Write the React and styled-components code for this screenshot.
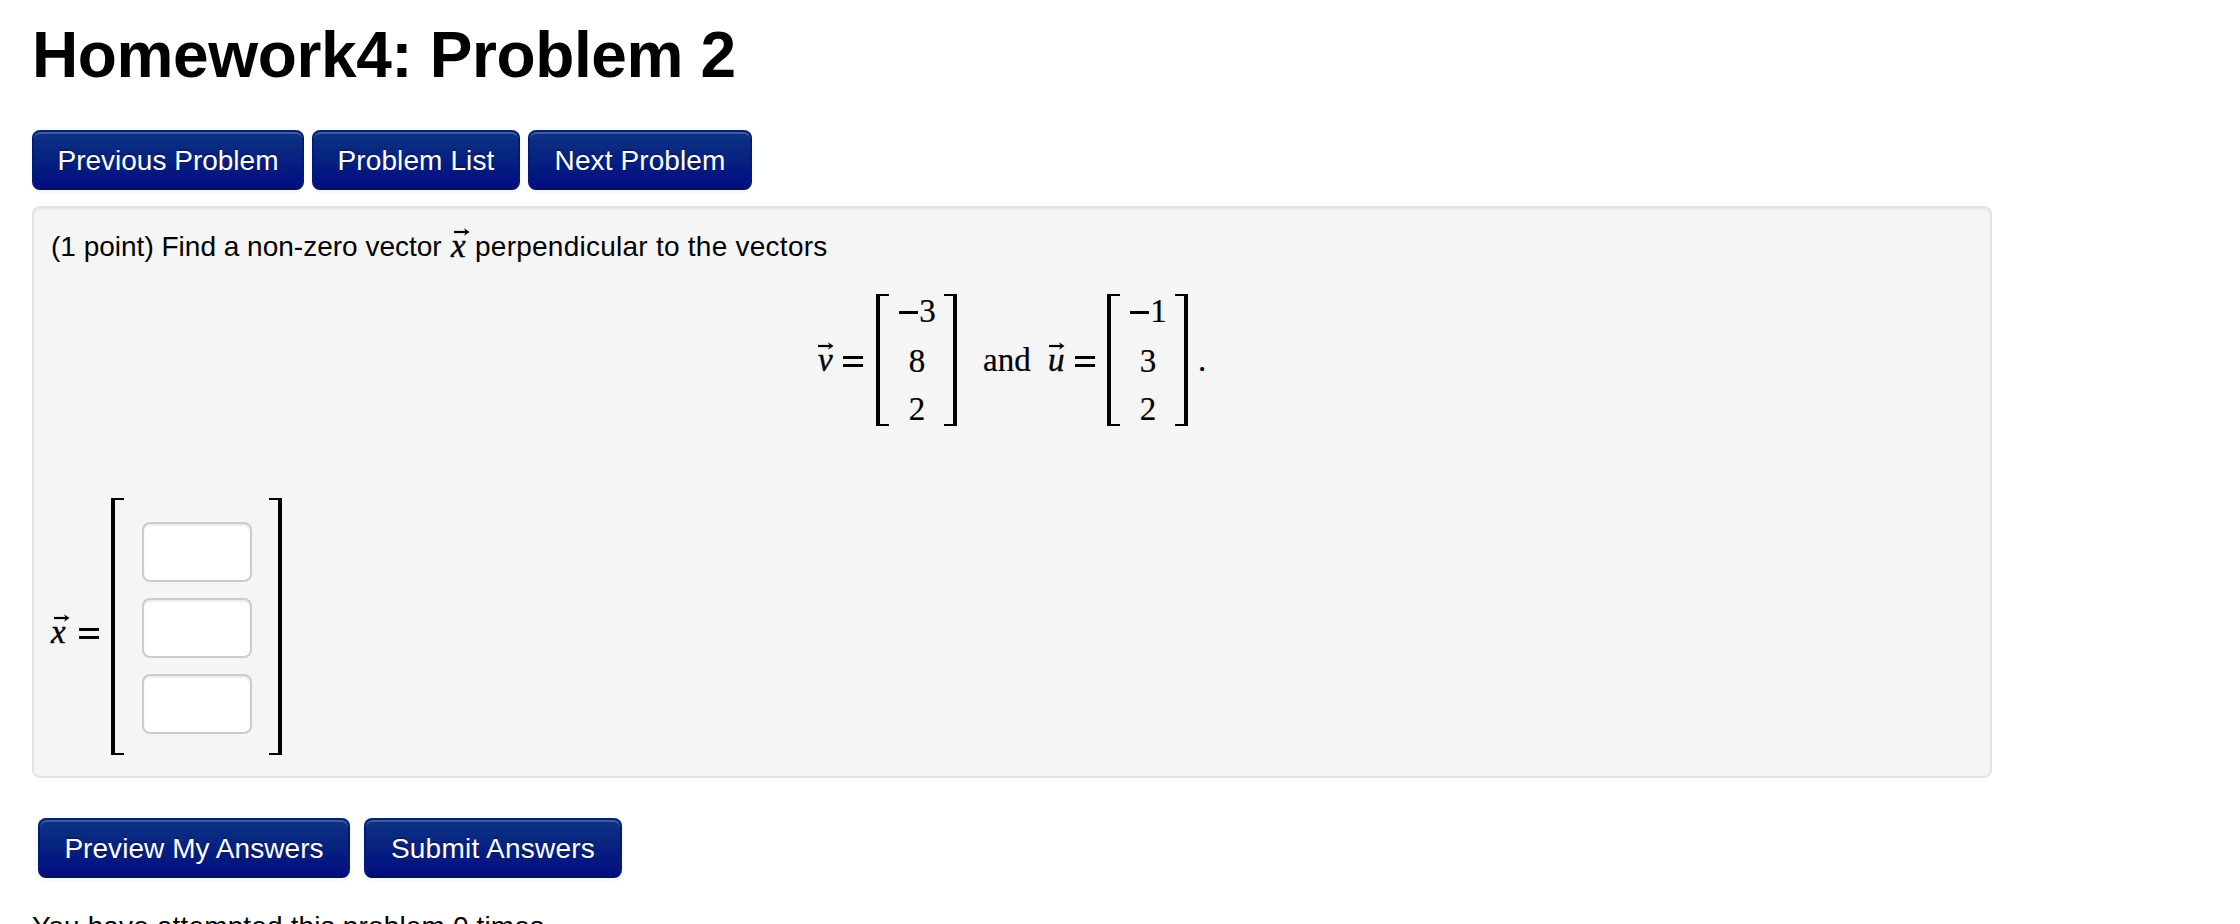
import React from "react";
import styled, { createGlobalStyle } from "styled-components";

const GlobalStyle = createGlobalStyle`
  body {
    margin: 0;
    background: #fff;
    color: #000;
    font-family: "Liberation Sans", Arial, sans-serif;
    font-size: 28px;
    line-height: 40px;
  }
  *, *::before, *::after {
    box-sizing: border-box;
  }
`;

const Page = styled.main`
  height: 924px;
  padding: 0 32px;
  overflow: hidden;
`;

const Title = styled.h1`
  margin: 0;
  padding-top: 15px;
  height: 130px;
  font-size: 64px;
  line-height: 80px;
  letter-spacing: -0.38px;
`;

const ButtonRow = styled.div`
  display: flex;
  gap: ${(props) => props.$gap || 8}px;
  margin: ${(props) => props.$margin || "0"};
`;

const Button = styled.button`
  width: ${(props) => props.$width}px;
  height: 60px;
  padding: 1px 0 0;
  border: 2px solid;
  border-color: #00207b #001b78 #001060;
  border-radius: 8px;
  background: linear-gradient(to bottom, #0d3583, #000c80) border-box;
  box-shadow: inset 0 2px 0 rgba(255, 255, 255, 0.2),
    0 2px 4px rgba(0, 0, 0, 0.05);
  color: #fff;
  font: 28px/40px "Liberation Sans", Arial, sans-serif;
  letter-spacing: ${(props) => props.$spacing || 0}px;
  text-shadow: 0 -2px 0 rgba(0, 0, 0, 0.25);
  white-space: nowrap;
`;

const Well = styled.section`
  width: 1960px;
  height: 572px;
  margin-top: 16px;
  padding: 19px 17px 0;
  border: 2px solid #e3e3e3;
  border-radius: 8px;
  background: #f5f5f5;
  box-shadow: inset 0 2px 2px rgba(0, 0, 0, 0.05);
`;

const Statement = styled.p`
  display: flex;
  margin: 0;
  height: 67px;
  white-space: pre;
`;

const Prompt = styled.span`
  width: ${(props) => props.$width}px;
  letter-spacing: ${(props) => props.$spacing || 0}px;
`;

const Equation = styled.div`
  display: flex;
  align-items: center;
  height: ${(props) => props.$height}px;
  padding-left: ${(props) => props.$indent || 0}px;
  margin-top: ${(props) => props.$top || 0}px;
  font-family: "Liberation Serif", "Times New Roman", serif;
  font-size: 33px;
  -webkit-text-stroke: 0.2px #000;
`;

const VectorBox = styled.span`
  display: flex;
  flex-direction: column;
  flex-shrink: 0;
  width: ${(props) => props.$width || 25}px;
  margin-top: ${(props) => props.$top || 0}px;
  font: italic 33px/28px "Liberation Serif", "Times New Roman", serif;
  -webkit-text-stroke: 0.4px #000;

  svg {
    display: block;
    flex-shrink: 0;
    margin: 0 0 -5px ${(props) => props.$shift || 0}px;
  }
`;

const Equals = styled.span`
  width: 20px;
  height: 11px;
  margin: ${(props) => props.$margin};
  border: solid #000;
  border-width: 3px 0;
`;

const Bracket = styled.span`
  align-self: stretch;
  width: 13px;
  border: solid #000;
  border-width: ${(props) => (props.$right ? "2px 4px 2px 0" : "2px 0 2px 4px")};
`;

const Entries = styled.div`
  display: grid;
  grid-template-rows: 50px 48px 33px;
  width: 55px;
  height: 132px;
  padding: 1px 0 0 1px;
  line-height: 33px;
`;

const Entry = styled.span`
  display: flex;
  align-items: flex-start;
  justify-content: center;
`;

const Minus = styled.span`
  width: 19px;
  height: 3px;
  margin: 16px 1px 0 1px;
  background: #000;
`;

const Word = styled.span`
  width: ${(props) => props.$width}px;
  margin-left: ${(props) => props.$left}px;
  line-height: 40px;
`;

const Answers = styled.div`
  display: flex;
  flex-direction: column;
  gap: 16px;
  margin: 3px 17px 0 18px;
`;

const AnswerInput = styled.input`
  display: block;
  width: 110px;
  height: 60px;
  padding: 8px 12px;
  border: 2px solid #ccc;
  border-radius: 8px;
  background: #fff;
  box-shadow: inset 0 2px 2px rgba(0, 0, 0, 0.075);
  font-size: 28px;
  outline: none;
`;

const Attempts = styled.p`
  margin: 29px 0 0;
  letter-spacing: 0.15px;
`;

const Vector = ({ name, ...rest }) => (
  <VectorBox {...rest}>
    <svg width="16" height="10" viewBox="0 0 16 10">
      <path d="M0 5H13" stroke="#000" strokeWidth="2.2" />
      <path d="M10 1.2L15.5 5L10 8.8L11.8 5Z" />
    </svg>
    {name}
  </VectorBox>
);

const Matrix = ({ values }) => (
  <>
    <Bracket />
    <Entries>
      {values.map((value) => (
        <Entry key={value}>
          {value < 0 && <Minus />}
          {Math.abs(value)}
        </Entry>
      ))}
    </Entries>
    <Bracket $right />
  </>
);

const App = () => (
  <>
    <GlobalStyle />
    <Page>
      <Title>Homework4: Problem 2</Title>
      <ButtonRow>
        <Button $width={272}>Previous Problem</Button>
        <Button $width={208} $spacing={0.1}>Problem List</Button>
        <Button $width={224} $spacing={0.1}>Next Problem</Button>
      </ButtonRow>
      <Well>
        <Statement>
          <Prompt $width={400}>(1 point) Find a non-zero vector</Prompt>
          <Vector name="x" $width={24} $shift={3} $top={0} />
          <Prompt $spacing={0.25}>perpendicular to the vectors</Prompt>
        </Statement>
        <Equation $height={132} $indent={767}>
          <Vector name="v" $top={-5} />
          <Equals $margin="2px 13px 0 0" />
          <Matrix values={[-3, 8, 2]} />
          <Word $left={26} $width={65}>and</Word>
          <Vector name="u" $width={27} $top={-5} $shift={1} />
          <Equals $margin="2px 12px 0 0" />
          <Matrix values={[-1, 3, 2]} />
          <Word $left={10}>.</Word>
        </Equation>
        <Equation $height={257} $top={72}>
          <Vector name="x" $width={28} $shift={3} $top={5} />
          <Equals $margin="13px 12px 0 0" />
          <Bracket />
          <Answers>
            <AnswerInput aria-label="x1" />
            <AnswerInput aria-label="x2" />
            <AnswerInput aria-label="x3" />
          </Answers>
          <Bracket $right />
        </Equation>
      </Well>
      <ButtonRow $gap={14} $margin="40px 0 0 6px">
        <Button $width={312} $spacing={0.05}>Preview My Answers</Button>
        <Button $width={258} $spacing={0.25}>Submit Answers</Button>
      </ButtonRow>
      <Attempts>You have attempted this problem 0 times.</Attempts>
    </Page>
  </>
);

export default App;
